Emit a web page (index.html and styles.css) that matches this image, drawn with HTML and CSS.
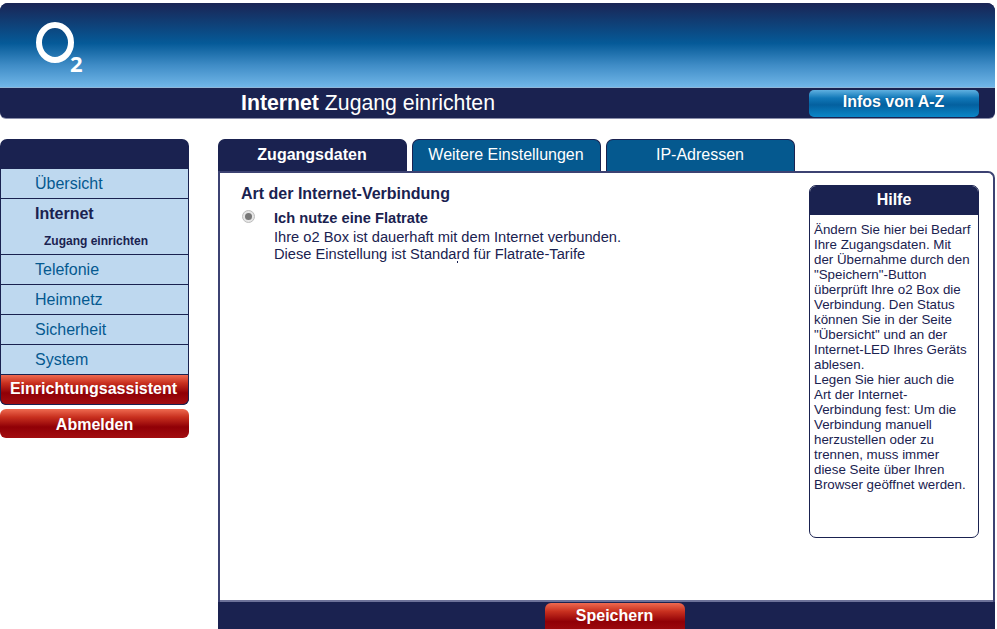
FILE: index.html
```html
<!DOCTYPE html>
<html lang="de">
<head>
<meta charset="utf-8">
<title>Internet Zugang einrichten</title>
<link rel="stylesheet" href="styles.css">
</head>
<body>
<div class="page">
  <header class="header">
    <div class="banner">
      <svg class="logo" width="60" height="60" viewBox="0 0 60 60" aria-label="o2">
        <ellipse cx="20" cy="21.5" rx="16" ry="17.5" fill="none" stroke="#fff" stroke-width="6"/>
        <text x="35" y="51" class="logo-two">2</text>
      </svg>
    </div>
    <div class="titlebar">
      <h1 class="title"><b>Internet</b> Zugang einrichten</h1>
      <a class="btn-blue">Infos von A-Z</a>
    </div>
  </header>
  <div class="content">
    <nav class="sidebar">
      <div class="menu">
        <div class="menu-head"></div>
        <a class="menu-item">Übersicht</a>
        <div class="menu-group">
          <a class="menu-current">Internet</a>
          <a class="menu-sub">Zugang einrichten</a>
        </div>
        <a class="menu-item">Telefonie</a>
        <a class="menu-item">Heimnetz</a>
        <a class="menu-item">Sicherheit</a>
        <a class="menu-item">System</a>
        <a class="btn-red btn-wizard">Einrichtungsassistent</a>
      </div>
      <a class="btn-red btn-logout">Abmelden</a>
    </nav>
    <main class="main">
      <div class="tabs">
        <a class="tab tab-active">Zugangsdaten</a>
        <a class="tab">Weitere Einstellungen</a>
        <a class="tab">IP-Adressen</a>
      </div>
      <section class="panel">
        <div class="panel-body">
          <div class="form">
            <h2 class="form-title">Art der Internet-Verbindung</h2>
            <div class="option">
              <span class="radio"><span class="radio-dot"></span></span>
              <div class="option-text">
                <strong class="option-name">Ich nutze eine Flatrate</strong>
                <p class="option-desc">Ihre o2 Box ist dauerhaft mit dem Internet verbunden.<br>Diese Einstellung ist Standard für Flatrate-Tarife</p>
              </div>
            </div>
            <span class="speck"></span>
          </div>
          <aside class="help">
            <div class="help-title">Hilfe</div>
            <p class="help-text">Ändern Sie hier bei Bedarf Ihre Zugangsdaten. Mit der Übernahme durch den "Speichern"-Button überprüft Ihre o2 Box die Verbindung. Den Status können Sie in der Seite "Übersicht" und an der Internet-LED Ihres Geräts ablesen.<br>Legen Sie hier auch die Art der Internet-Verbindung fest: Um die Verbindung manuell herzustellen oder zu trennen, muss immer diese Seite über Ihren Browser geöffnet werden.</p>
          </aside>
        </div>
        <div class="panel-foot"><a class="btn-red btn-save">Speichern</a></div>
      </section>
    </main>
  </div>
</div>
</body>
</html>
```
FILE: styles.css
```css
* { box-sizing: border-box; }
html, body { margin: 0; padding: 0; background: #fff; }
body { font-family: "Liberation Sans", Arial, sans-serif; color: #1a2250; overflow: hidden; }
.page { width: 997px; height: 629px; padding: 3px 2px 0 0; display: flex; flex-direction: column; overflow: hidden; }

.header { height: 115px; flex: none; border-radius: 8px 8px 6px 6px; overflow: hidden; background: #1a2250; box-shadow: 0 1px 0 #8a8fab; }
.banner { height: 85px; padding: 21px 0 0 35px; background: linear-gradient(to bottom, #1a2555 0%, #055a98 48%, #3f8cc6 74%, #70b6e8 100%); border-bottom: 1px solid #8fb6d8; }
.logo { display: block; margin-top: -3px; }
.logo-two { font-family: "Open Sans", "Liberation Sans", sans-serif; font-size: 22px; font-weight: 700; fill: #fff; }
.titlebar { height: 30px; display: flex; align-items: center; justify-content: space-between; padding: 0 16px 0 241px; }
.title { margin: 0; font-size: 21.25px; font-weight: 400; color: #fff; line-height: 30px; }
.title b { font-weight: 700; }
.btn-blue { width: 170px; height: 27px; margin-top: 1px; display: flex; align-items: center; justify-content: center; padding: 0 1px 3px 0; border-radius: 5px; color: #fff; font-size: 16px; font-weight: 700; text-shadow: 0 0 1px #0a4a80; background: linear-gradient(to bottom, #5fb0e0 0%, #1178b8 30%, #04609f 55%, #0a86c8 100%); }

.content { flex: 1; min-height: 0; display: flex; gap: 29px; padding-top: 21px; }
.sidebar { width: 189px; flex: none; display: flex; flex-direction: column; gap: 4px; }
.menu { border-radius: 7px 7px 6px 6px; background: #1a2250; display: flex; flex-direction: column; overflow: hidden; padding: 0 1px; }
.menu-head { height: 30px; margin: 0 -1px; }
.menu-item { height: 30px; padding: 0 0 0 34px; line-height: 29px; font-size: 16px; color: #05598f; background: #bed8ef; border-bottom: 1px solid #1a2250; }
.menu-group { height: 56px; background: #bed8ef; border-bottom: 1px solid #1a2250; }
.menu-current { display: block; height: 30px; padding-left: 34px; line-height: 29px; font-size: 16px; font-weight: 700; color: #1a2250; }
.menu-sub { display: block; padding-left: 43px; line-height: 24px; font-size: 12px; font-weight: 700; color: #1a2250; }
.btn-red { display: flex; align-items: center; justify-content: center; color: #fff; font-size: 16px; font-weight: 700; background: linear-gradient(to bottom, #ef6a50 0%, #c8301f 28%, #900006 62%, #a20d10 100%); }
.btn-wizard { height: 30px; margin: 0 -1px; padding: 0 2px 2px 0; border-radius: 0 0 6px 6px; border: 1px solid #1a2250; border-top: 0; }
.btn-logout { height: 29px; border-radius: 6px; padding-top: 2px; }

.main { width: 777px; flex: none; display: flex; flex-direction: column; }
.tabs { height: 32px; flex: none; display: flex; gap: 5px; }
.tab { width: 189px; height: 32px; display: flex; align-items: center; justify-content: center; padding: 0 1px 2px 0; border-radius: 7px 7px 0 0; background: #05598f; border: 1px solid #1a2250; border-bottom: 0; color: #fff; font-size: 16px; }
.tab-active { background: #1a2250; font-weight: 700; }
.panel { flex: 1; min-height: 0; display: flex; flex-direction: column; border: 2px solid #3c4272; border-bottom: 0; border-radius: 0 7px 0 0; background: #fff; }
.panel-body { flex: 1; min-height: 0; display: flex; justify-content: space-between; padding: 11px 14px 0 21px; border-bottom: 2px solid #6d7299; }
.form { position: relative; flex: 1; }
.form-title { margin: 0; font-size: 16px; line-height: 20px; font-weight: 700; color: #1a2250; }
.option { display: flex; margin-top: 4px; }
.radio { width: 13px; height: 13px; margin: 2px 0 0 1px; flex: none; border-radius: 50%; background: #e6e6e6; border: 1px solid #bdbdbd; display: flex; align-items: center; justify-content: center; }
.radio-dot { width: 7px; height: 7px; border-radius: 50%; background: #777; }
.option-text { margin-left: 19px; }
.option-name { display: block; font-size: 14.67px; line-height: 21px; color: #1a2250; }
.option-desc { margin: 0; font-size: 14.67px; line-height: 17px; color: #1a2250; }
.speck { position: absolute; left: 216px; top: 77px; width: 1px; height: 2px; background: #1a2250; }

.help { width: 170px; height: 353px; margin-top: 1px; flex: none; border: 1px solid #1a2250; border-radius: 7px; overflow: hidden; }
.help-title { height: 29px; background: #1a2250; color: #fff; font-size: 16px; font-weight: 700; text-align: center; line-height: 27px; }
.help-text { margin: 0; padding: 7px 7px 0 4px; font-size: 13.33px; line-height: 15px; color: #1a2250; }

.panel-foot { height: 27px; flex: none; background: #1a2250; margin: 0 -2px; display: flex; justify-content: center; padding-left: 16px; }
.btn-save { width: 140px; height: 30px; margin-top: 1px; padding-bottom: 4px; border-radius: 6px 6px 0 0; }
```
